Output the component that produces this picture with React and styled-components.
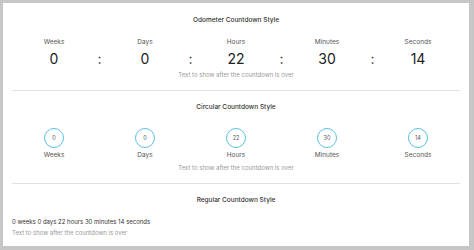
import styled, { createGlobalStyle } from "styled-components";

const GlobalStyle = createGlobalStyle`
  html, body {
    margin: 0;
    padding: 0;
    background: #c6c6c6;
  }
  body {
    font-family: Inter, "Noto Sans", sans-serif;
    color: #222;
  }
`;

const units = [
  { label: "Weeks", value: 0 },
  { label: "Days", value: 0 },
  { label: "Hours", value: 22 },
  { label: "Minutes", value: 30 },
  { label: "Seconds", value: 14 },
];

const AFTER = "Text to show after the countdown is over";

const App = () => {
  return (
    <Page>
      <GlobalStyle />
      <Card>
        <Section>
          <Title>Odometer Countdown Style</Title>
          <OdometerRow>
            {units.map((u, i) => [
              <OdoCell key={u.label}>
                <UnitLabel>{u.label}</UnitLabel>
                <OdoNumber>{u.value}</OdoNumber>
              </OdoCell>,
              i < units.length - 1 && <Colon key={u.label + "-colon"}>:</Colon>,
            ])}
          </OdometerRow>
          <After $center>{AFTER}</After>
        </Section>

        <Section>
          <Title>Circular Countdown Style</Title>
          <CircleRow>
            {units.map((u) => (
              <CircleCell key={u.label}>
                <Circle>{u.value}</Circle>
                <UnitLabel>{u.label}</UnitLabel>
              </CircleCell>
            ))}
          </CircleRow>
          <After $center>{AFTER}</After>
        </Section>

        <Section $last>
          <Title>Regular Countdown Style</Title>
          <Regular>0 weeks 0 days 22 hours 30 minutes 14 seconds</Regular>
          <After>{AFTER}</After>
        </Section>
      </Card>
    </Page>
  );
};

export default App;

const Page = styled.div`
  width: 474px;
  height: 250px;
  box-sizing: border-box;
  padding: 3px 5px 4px 3px;
`;

const Card = styled.div`
  background: #fff;
  height: 100%;
  box-sizing: border-box;
  padding: 12px 9px 0;
`;

const Section = styled.div`
  border-bottom: ${(p) => (p.$last ? "none" : "1px solid #e2e2e2")};
  padding-bottom: 10px;
  margin-bottom: 11px;
`;

const Title = styled.div`
  text-align: center;
  font-size: 6.5px;
  line-height: 10px;
  font-weight: 500;
  color: #333;
`;

const OdometerRow = styled.div`
  display: grid;
  grid-template-columns: repeat(9, 45.5px);
  justify-content: center;
  margin-top: 12px;
`;

const OdoCell = styled.div`
  display: flex;
  flex-direction: column;
  align-items: center;
`;

const UnitLabel = styled.div`
  font-size: 6.5px;
  line-height: 10px;
  color: #555;
`;

const OdoNumber = styled.div`
  font-size: 14px;
  line-height: 16px;
  margin-top: 4px;
  color: #222;
`;

const Colon = styled.div`
  align-self: end;
  text-align: center;
  font-size: 14px;
  line-height: 16px;
  color: #333;
`;

const After = styled.div`
  text-align: ${(p) => (p.$center ? "center" : "left")};
  font-size: 6px;
  line-height: 10px;
  color: #9a9a9a;
  margin-top: ${(p) => (p.$center ? "3px" : "1px")};
`;

const CircleRow = styled.div`
  display: grid;
  grid-template-columns: repeat(5, 91px);
  justify-content: center;
  margin-top: 16px;
`;

const CircleCell = styled.div`
  display: flex;
  flex-direction: column;
  align-items: center;
  gap: 2px;
`;

const Circle = styled.div`
  width: 20px;
  height: 20px;
  box-sizing: border-box;
  border: 1.5px solid #5cc0e2;
  border-radius: 50%;
  display: flex;
  align-items: center;
  justify-content: center;
  font-size: 5.5px;
  color: #555;
`;

const Regular = styled.div`
  margin-top: 12px;
  font-size: 6px;
  line-height: 10px;
  color: #333;
`;
